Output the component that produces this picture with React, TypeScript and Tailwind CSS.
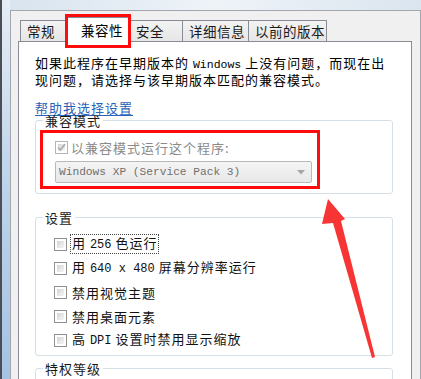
import { FC, ReactNode } from "react";

const cjk = "font-['Noto_Sans_CJK_SC','Noto_Sans',sans-serif]";
const mono = "font-['Liberation_Mono','Noto_Sans_CJK_SC',monospace]";

// Win7 style checkbox
const Check: FC<{ checked?: boolean; disabled?: boolean }> = ({ checked, disabled }) => (
  <span
    className={`relative flex h-[13px] w-[13px] shrink-0 border bg-white p-[2px] ${
      disabled ? "border-[#b5b5b5]" : "border-[#8e8f8f]"
    }`}
  >
    <span className="h-full w-full bg-gradient-to-br from-[#d3d5d8] to-[#f6f6f6]" />
    {checked && (
      <svg viewBox="0 0 13 13" className="absolute -left-px -top-px h-[13px] w-[13px]">
        <path d="M3 6.5 L5.4 9 L10 3.2" fill="none" stroke="#a9a9a9" strokeWidth="1.7" />
      </svg>
    )}
  </span>
);

const Group: FC<{ title: string; className?: string; children?: ReactNode }> = ({
  title,
  className = "",
  children,
}) => (
  <fieldset className={`shrink-0 rounded-[3px] border border-[#d5dfe5] p-0 ${className}`}>
    <legend className="ml-[7px] px-[2px] text-[13px] leading-[15px] tracking-[1px] text-[#1a1a1a]">
      {title}
    </legend>
    {children}
  </fieldset>
);

const Row: FC<{ children: ReactNode; focus?: boolean }> = ({ children, focus }) => (
  <div className="flex h-[24px] items-center gap-[3px]">
    <Check />
    <span
      className={`whitespace-nowrap text-[13px] leading-[15px] tracking-[1px] text-[#111] ${
        focus ? "border border-dotted border-[#444] px-px" : "border border-transparent px-px"
      }`}
    >
      {children}
    </span>
  </div>
);

const Num: FC<{ children: ReactNode }> = ({ children }) => (
  <span className={`${mono} text-[12px] tracking-normal`}>{children}</span>
);

const tabs = [
  { label: "常规", w: "w-[48px]" },
  { label: "兼容性", w: "w-[63px]", active: true },
  { label: "安全", w: "w-[54px]" },
  { label: "详细信息", w: "w-[67px]" },
  { label: "以前的版本", w: "w-[79px]" },
];

const App: FC = () => {
  return (
    <div className={`relative flex h-[379px] w-[421px] overflow-hidden border-l-2 border-[#4b4f55] ${cjk}`}>
      {/* window frame */}
      <div className="w-[8px] shrink-0 bg-gradient-to-b from-[#e6edf5] via-[#bcd3ea] to-[#a6c3e4]" />
      <div className="flex min-h-0 flex-1 flex-col">
        <div className="h-[10px] shrink-0 bg-gradient-to-r from-[#d9e4ef] via-[#eef3f8] to-[#dbe5ef]" />
        <div className="flex min-h-0 flex-1 flex-col border-l border-r border-t border-[#a3a7ad] bg-[#f0f0f0] pl-[7px] pr-[8px] pt-[6px]">
          {/* tabs */}
          <div className="ml-[2px] flex h-[24px] shrink-0 items-end">
            {tabs.map((t) =>
              t.active ? (
                <div
                  key={t.label}
                  className={`relative z-10 -mb-px -ml-px flex h-[25px] ${t.w} items-start border border-b-0 border-[#898c95] bg-white pl-[13px] pt-[4px] text-[13.5px] leading-[16px] tracking-[0.5px] text-black`}
                >
                  {t.label}
                  <span className="pointer-events-none absolute -bottom-[6px] -left-[3px] -right-[2px] -top-[4px] border-[3px] border-[#ff0d0d]" />
                </div>
              ) : (
                <div
                  key={t.label}
                  className={`-ml-px flex h-[21px] ${t.w} items-center border border-b-0 border-[#898c95] bg-gradient-to-b from-[#f3f3f3] to-[#e6e6e6] pl-[6px] text-[13.5px] leading-[16px] tracking-[0.5px] text-[#1a1a1a] first:ml-0`}
                >
                  {t.label}
                </div>
              )
            )}
          </div>

          {/* panel */}
          <div className="flex min-h-0 flex-1 flex-col overflow-hidden border border-b-0 border-[#898c95] bg-white pl-[16px] pr-[18px] pt-[13px]">
            <p className="shrink-0 whitespace-nowrap text-[13px] leading-[15px] tracking-[1px] text-black">
              如果此程序在早期版本的 <span className={`${mono} text-[11.5px] leading-[15px] tracking-normal`}>Windows</span> 上没有问题，而现在出
              <br />
              现问题，请选择与该早期版本匹配的兼容模式。
            </p>
            <a className="mt-[13px] w-fit shrink-0 text-[13px] leading-[15px] tracking-[1px] text-[#2a63b8] underline underline-offset-2">
              帮助我选择设置
            </a>

            <Group title="兼容模式" className="-mt-[2px] pb-[4px]">
              <div className="ml-[4px] mt-[2px] w-[280px] border-[3px] border-[#ff0d0d] pb-[3px] pl-[12px] pr-[5px] pt-[7px]">
                <div className="flex h-[15px] items-center gap-[3px]">
                  <Check checked disabled />
                  <span className="whitespace-nowrap text-[13px] leading-[15px] tracking-[1px] text-[#8a8a8a]">
                    以兼容模式运行这个程序:
                  </span>
                </div>
                <div className="mt-[6px] flex h-[22px] items-center justify-between rounded-[2px] border border-[#b9b9b9] bg-gradient-to-b from-[#f4f4f4] to-[#e8e8e8] pl-[3px] pr-[6px]">
                  <span className={`${mono} text-[11.2px] text-[#707070]`}>Windows XP (Service Pack 3)</span>
                  <svg viewBox="0 0 8 5" className="h-[5px] w-[8px]">
                    <path d="M0 0 H8 L4 4.5 Z" fill="#a6a6a6" />
                  </svg>
                </div>
              </div>
            </Group>

            <Group title="设置" className="mt-[16px] pb-[3px]">
              <div className="mt-[7px] pl-[18px]">
                <Row focus>
                  用 <Num>256</Num> 色运行
                </Row>
                <Row>
                  用 <Num>640 x 480</Num> 屏幕分辨率运行
                </Row>
                <Row>禁用视觉主题</Row>
                <Row>禁用桌面元素</Row>
                <Row>
                  高 <Num>DPI</Num> 设置时禁用显示缩放
                </Row>
              </div>
            </Group>

            <Group title="特权等级" className="mt-[5px] h-[60px]" />
          </div>
        </div>
      </div>

      {/* annotation arrow */}
      <svg className="pointer-events-none absolute -left-[2px] top-0 h-[379px] w-[421px]" viewBox="0 0 421 379">
        <polygon
          points="328,199 345,219 341,221 375,357 372,358 333,223 322,224"
          fill="#f73535"
        />
      </svg>
    </div>
  );
};

export default App;
